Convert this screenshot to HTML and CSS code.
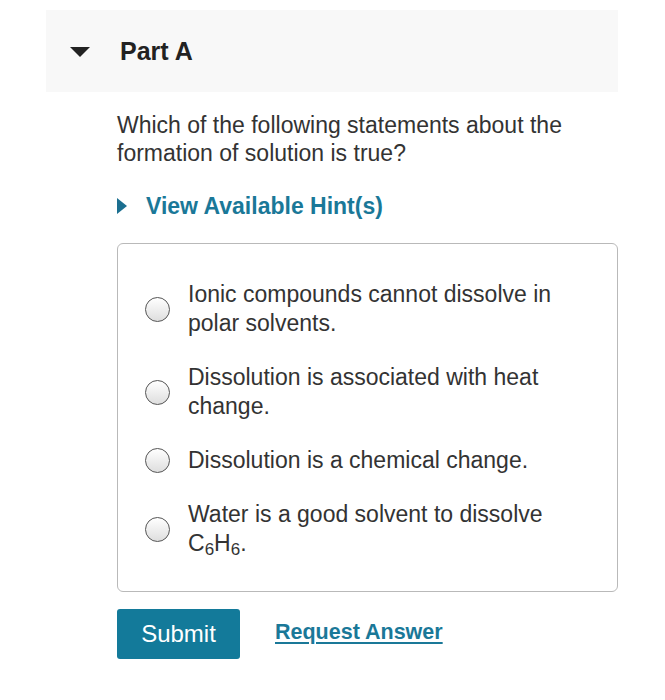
FILE: index.html
```html
<!DOCTYPE html>
<html>
<head>
<meta charset="utf-8">
<link rel="stylesheet" href="styles.css">
</head>
<body>
<div class="page">
  <div class="part-header">
    <span class="caret-down"></span>
    <h2 class="part-title">Part A</h2>
  </div>
  <div class="content">
    <p class="question">Which of the following statements about the formation of solution is true?</p>
    <div class="hint">
      <span class="caret-right"></span>
      <span class="hint-text">View Available Hint(s)</span>
    </div>
    <div class="options">
      <label class="option"><span class="radio"></span><span class="opt-text">Ionic compounds cannot dissolve in polar solvents.</span></label>
      <label class="option"><span class="radio"></span><span class="opt-text">Dissolution is associated with heat change.</span></label>
      <label class="option"><span class="radio"></span><span class="opt-text">Dissolution is a chemical change.</span></label>
      <label class="option"><span class="radio"></span><span class="opt-text"><span>Water is a good solvent to dissolve</span> <span class="formula">C<sub>6</sub>H<sub>6</sub>.</span></span></label>
    </div>
    <div class="actions">
      <button class="submit">Submit</button>
      <a class="request" href="#">Request Answer</a>
    </div>
  </div>
</div>
</body>
</html>
```
FILE: styles.css
```css
* { box-sizing: border-box; }
body {
  margin: 0;
  background: #fff;
  font-family: "Liberation Sans", Arial, sans-serif;
  color: #333;
}
.page {
  padding: 10px 47px 0 46px;
}
.part-header {
  height: 82px;
  background: #f8f8f8;
  display: flex;
  align-items: center;
  padding-left: 24px;
}
.caret-down {
  width: 0;
  height: 0;
  border-left: 10px solid transparent;
  border-right: 10px solid transparent;
  border-top: 10px solid #222;
  margin-top: 2px;
}
.part-title {
  margin: 0 0 0 30px;
  font-size: 25px;
  font-weight: bold;
  color: #222;
}
.content {
  padding-left: 71px;
}
.question {
  margin: 19px 0 0 0;
  font-size: 23px;
  line-height: 28px;
  width: 470px;
  color: #333;
}
.hint {
  display: flex;
  align-items: center;
  margin-top: 25px;
  height: 28px;
}
.caret-right {
  width: 0;
  height: 0;
  border-top: 8px solid transparent;
  border-bottom: 8px solid transparent;
  border-left: 10px solid #1b6f90;
}
.hint-text {
  margin-left: 19px;
  font-size: 23px;
  font-weight: bold;
  color: #1a7898;
}
.options {
  margin-top: 23px;
  border: 1px solid #b9b9b9;
  border-radius: 6px;
  padding: 36px 20px 33px 27px;
  display: flex;
  flex-direction: column;
  gap: 25px;
}
.option {
  display: flex;
  align-items: center;
}
.radio {
  flex: none;
  width: 25px;
  height: 25px;
  border-radius: 50%;
  border: 1.5px solid #555;
  background: linear-gradient(#ffffff, #dedede);
}
.opt-text {
  margin-left: 18px;
  font-size: 23px;
  line-height: 29px;
  width: 385px;
  color: #333;
}
.formula {
  white-space: nowrap;
}
.opt-text sub {
  font-size: 17px;
  vertical-align: -4px;
  line-height: 1;
}
.actions {
  margin-top: 17px;
  display: flex;
  align-items: center;
}
.submit {
  width: 123px;
  height: 50px;
  background: #137a9a;
  color: #fff;
  border: none;
  border-radius: 3px;
  font-family: "Liberation Sans", Arial, sans-serif;
  font-size: 24px;
  padding: 0;
}
.request {
  margin-left: 35px;
  margin-top: -4px;
  font-size: 21.5px;
  font-weight: bold;
  color: #1a7898;
  text-decoration: underline;
  text-underline-offset: 3px;
}
```
